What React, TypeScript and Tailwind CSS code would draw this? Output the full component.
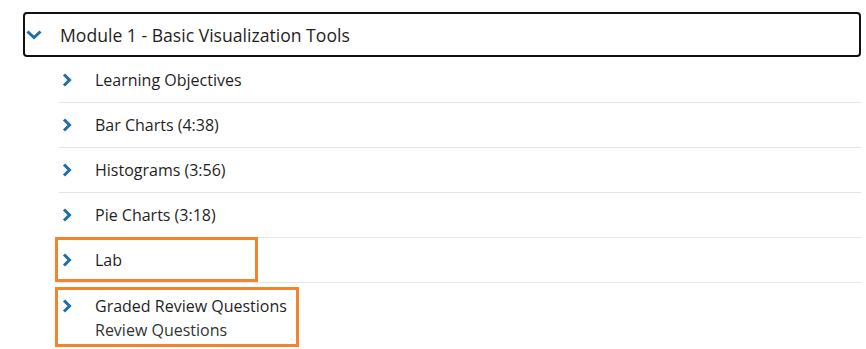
import React from "react";

const ChevronRight = () => (
  <svg width="10" height="14" viewBox="0 0 10 14" className="shrink-0">
    <path d="M2 1.5 L7.5 7 L2 12.5" fill="none" stroke="#1f6ea8" strokeWidth="3" strokeLinecap="butt" strokeLinejoin="miter" />
  </svg>
);

const ChevronDown = () => (
  <svg width="16" height="10" viewBox="0 0 16 10" className="shrink-0">
    <path d="M1.5 1.5 L8 7.5 L14.5 1.5" fill="none" stroke="#1f6ea8" strokeWidth="3" strokeLinecap="butt" strokeLinejoin="miter" />
  </svg>
);

const items = ["Learning Objectives", "Bar Charts (4:38)", "Histograms (3:56)", "Pie Charts (3:18)", "Lab"];

export default function App() {
  return (
    <div
      className="relative w-[866px] h-[349px] bg-white overflow-hidden text-[#1f1f1f]"
      style={{ fontFamily: '"Open Sans", "Noto Sans", sans-serif' }}
    >
      <div className="pt-[12px] pl-[23px] pr-[5px]">
        <div className="flex items-center h-[45px] border-2 border-[#111] rounded-[4px] pl-[1px]">
          <ChevronDown />
          <span className="ml-[18px] text-[17.6px] leading-[24px]">Module 1 - Basic Visualization Tools</span>
        </div>
        <div className="ml-[36px] mt-[1px]">
          {items.map((t) => (
            <div key={t} className="flex items-center h-[45px] border-b border-[#e5e5e5] pl-[3px]">
              <ChevronRight />
              <span className="ml-[23px] text-[16px] leading-[24px]">{t}</span>
            </div>
          ))}
          <div className="flex items-start pt-[11px] pl-[3px]">
            <div className="pt-[5px]">
              <ChevronRight />
            </div>
            <div className="ml-[23px] flex flex-col">
              <span className="text-[16px] leading-[24px]">Graded Review Questions</span>
              <span className="text-[16px] leading-[24px] text-[#333]">Review Questions</span>
            </div>
          </div>
        </div>
      </div>
      <div className="absolute left-[55px] top-[237px] w-[203px] h-[45px] border-[3px] border-[#f6822b]" />
      <div className="absolute left-[55px] top-[287px] w-[244px] h-[60px] border-[3px] border-[#f6822b]" />
    </div>
  );
}
